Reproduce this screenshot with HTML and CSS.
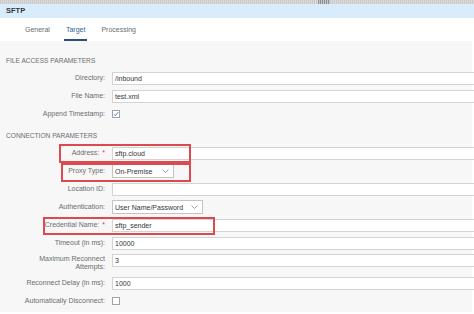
FILE: index.html
```html
<!DOCTYPE html>
<html lang="en">
<head>
	<meta charset="UTF-8">
	<title>SFTP</title>
	<link rel="stylesheet" href="styles.css">
</head>
<body>
	<div class="grip"></div>
	<div class="titlebar">SFTP</div>
	<div class="tabs">
		<span class="tab">General</span>
		<span class="tab active">Target</span>
		<span class="tab">Processing</span>
	</div>
	<div class="panel">
		<div class="section-title">FILE ACCESS PARAMETERS</div>
		<div class="row">
			<label class="label">Directory:</label>
			<div class="field">/inbound</div>
		</div>
		<div class="row">
			<label class="label">File Name:</label>
			<div class="field">test.xml</div>
		</div>
		<div class="row">
			<label class="label">Append Timestamp:</label>
			<div class="check">
				<svg width="6" height="6" viewBox="0 0 6 6"><polyline points="0.8,3.2 2.3,4.7 5.2,1.2" fill="none" stroke="#3a6ea5" stroke-width="0.9"/></svg>
			</div>
		</div>

		<div class="section-title second">CONNECTION PARAMETERS</div>
		<div class="row">
			<label class="label">Address:<span class="req">*</span></label>
			<div class="field">sftp.cloud</div>
		</div>
		<div class="row">
			<label class="label">Proxy Type:</label>
			<div class="select proxy">
				<span>On-Premise</span>
				<svg width="7" height="4" viewBox="0 0 7 4"><polyline points="0.5,0.5 3.5,3.5 6.5,0.5" fill="none" stroke="#7b8ea3" stroke-width="0.8"/></svg>
			</div>
		</div>
		<div class="row">
			<label class="label">Location ID:</label>
			<div class="field"></div>
		</div>
		<div class="row">
			<label class="label">Authentication:</label>
			<div class="select auth">
				<span>User Name/Password</span>
				<svg width="7" height="4" viewBox="0 0 7 4"><polyline points="0.5,0.5 3.5,3.5 6.5,0.5" fill="none" stroke="#7b8ea3" stroke-width="0.8"/></svg>
			</div>
		</div>
		<div class="row">
			<label class="label">Credential Name:<span class="req">*</span></label>
			<div class="field">sftp_sender</div>
		</div>
		<div class="row">
			<label class="label">Timeout (in ms):</label>
			<div class="field">10000</div>
		</div>
		<div class="row tall">
			<label class="label">Maximum Reconnect Attempts:</label>
			<div class="field">3</div>
		</div>
		<div class="row">
			<label class="label">Reconnect Delay (in ms):</label>
			<div class="field">1000</div>
		</div>
		<div class="row">
			<label class="label">Automatically Disconnect:</label>
			<div class="check"></div>
		</div>

		<div class="mark mark-address"></div>
		<div class="mark mark-proxy"></div>
		<div class="mark mark-credential"></div>
	</div>
</body>
</html>
```

FILE: styles.css
```css
*{
	padding: 0;
	margin: 0;
	box-sizing: border-box;
}
html,body{
	width: 100%;
	height: 100%;
}
body{
	font-family: "Liberation Sans", Arial, sans-serif;
	font-size: 7px;
	color: #32363a;
	background-color: #fff;
	overflow: hidden;
}
.grip{
	height: 4px;
	position: relative;
	background: repeating-linear-gradient(90deg, #c9c9c9 0, #c9c9c9 1px, #dcdcdc 1px, #dcdcdc 2px);
}
.grip:after{
	content: "";
	display: block;
	position: absolute;
	left: 318px;
	top: 0;
	width: 12px;
	height: 4px;
	background: repeating-linear-gradient(90deg, #8a8f96 0, #8a8f96 1px, #c4c8cc 1px, #c4c8cc 2px);
}
.titlebar{
	height: 14px;
	line-height: 14px;
	padding-left: 6px;
	background-color: #d9ecfb;
	font-weight: bold;
	font-size: 7.5px;
	color: #32363a;
}
.tabs{
	height: 23px;
	display: flex;
	gap: 12px;
	padding-left: 23px;
	background-color: #fff;
}
.tab{
	padding: 0 2px;
	line-height: 23px;
	color: #6a6d70;
}
.tab.active{
	color: #2f6497;
	box-shadow: 0 -2px 0 #2c4e77 inset;
}
.panel{
	position: relative;
	height: 271px;
	margin-right: 2px;
	padding-top: 15px;
	background-color: #f7f7f7;
}
.section-title{
	padding-left: 6px;
	line-height: 9px;
	font-size: 6.6px;
	color: #6a6d70;
	margin-bottom: 4px;
}
.section-title.second{
	margin-top: 8px;
}
.row{
	display: flex;
	align-items: center;
	height: 18px;
}
.row.tall{
	height: 22px;
	align-items: flex-start;
}
.label{
	width: 84px;
	margin-left: 21px;
	flex-shrink: 0;
	text-align: right;
	line-height: 8px;
	color: #6a6d70;
}
.row.tall .label{
	margin-top: 3px;
}
.req{
	color: #e0393e;
	margin-left: 3px;
}
.field{
	flex: 1;
	height: 13px;
	line-height: 11px;
	margin-left: 7px;
	margin-right: -2px;
	padding-left: 2px;
	background-color: #fff;
	border: 1px solid #d3d3d3;
	border-right: none;
	color: #32363a;
}
.row.tall .field{
	margin-top: 2px;
}
.select{
	height: 14px;
	margin-left: 7px;
	padding: 0 4px 0 2px;
	display: flex;
	align-items: center;
	justify-content: space-between;
	background-color: #fff;
	border: 1px solid #c4c4c4;
	color: #32363a;
}
.proxy{
	width: 62px;
}
.auth{
	width: 91px;
}
.check{
	width: 8px;
	height: 8px;
	margin-left: 7px;
	display: flex;
	justify-content: center;
	align-items: center;
	background-color: #fff;
	border: 1px solid #a3a3a3;
}
.mark{
	position: absolute;
	border: 2px solid #dc4a50;
}
.mark-address{
	left: 59px;
	top: 103px;
	width: 132px;
	height: 19px;
}
.mark-proxy{
	left: 61px;
	top: 122px;
	width: 130px;
	height: 19px;
}
.mark-credential{
	left: 43px;
	top: 176px;
	width: 172px;
	height: 18px;
}
```
